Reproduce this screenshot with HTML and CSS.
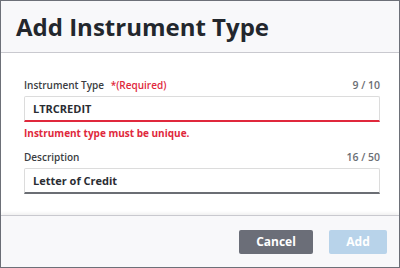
FILE: index.html
```html
<!DOCTYPE html>
<html>
<head>
<meta charset="utf-8" />
<link rel="stylesheet" href="styles.css">
<title>Add Instrument Type</title>
</head>
<body>
<div class="dialog">
    <div class="dialog-head">
        <h1>Add Instrument Type</h1>
    </div>
    <div class="dialog-body">
        <div class="field">
            <div class="field-top">
                <label>Instrument Type <span class="req">*(Required)</span></label>
                <span class="count">9 / 10</span>
            </div>
            <div class="f-text f-error">LTRCREDIT</div>
            <p class="err">Instrument type must be unique.</p>
        </div>
        <div class="field">
            <div class="field-top">
                <label>Description</label>
                <span class="count">16 / 50</span>
            </div>
            <div class="f-text">Letter of Credit</div>
        </div>
    </div>
    <div class="dialog-foot">
        <a class="btn btn-cancel" href="javascript:void(0)">Cancel</a>
        <a class="btn btn-add" href="javascript:void(0)">Add</a>
    </div>
</div>
</body>
</html>
```

FILE: styles.css
```css
body,div,p,h1{margin:0;padding:0;}
body{font-family:"Open Sans",Arial,sans-serif;color:#333;}
a{text-decoration:none;}
.dialog{box-sizing:border-box;width:400px;height:268px;border:1px solid #6d7078;display:flex;flex-direction:column;background:#fff;}
.dialog-head{height:51px;background:#f8f8fa;border-bottom:1px solid #c9c9cf;display:flex;align-items:center;padding:0 15px;}
.dialog-head h1{font:700 24px/30px "Open Sans",Arial,sans-serif;color:#23272d;margin-top:1px;}
.dialog-body{height:162px;padding:25px 19px 0 23px;box-sizing:border-box;}
.field-top{display:flex;justify-content:space-between;align-items:center;height:14px;margin-bottom:4px;}
.field-top label{font:600 10px/14px "Open Sans",Arial,sans-serif;color:#3a3d42;}
.field-top .req{color:#e0283c;margin-left:4px;}
.count{font:600 10.5px/14px "Open Sans",Arial,sans-serif;color:#6b6e74;}
.f-text{box-sizing:border-box;height:26px;border:1px solid #dcdcdc;border-bottom:2px solid #6b6e74;border-radius:2px 2px 0 0;padding:0 8px;font:700 11px/23px "Open Sans",Arial,sans-serif;color:#2a2d33;}
.f-text.f-error{border-bottom-color:#e0283c;}
.err{font:700 10px/14px "Open Sans",Arial,sans-serif;color:#e0283c;margin:4px 0 10px;}
.dialog-foot{flex:1;background:#f8f8fa;border-top:1px solid #c9c9cf;box-shadow:0 -2px 3px rgba(0,0,0,0.06);display:flex;justify-content:flex-end;align-items:center;gap:16px;padding:0 12px 0 0;}
.btn{display:block;height:24px;line-height:24px;border-radius:2px;color:#fff;font:700 12px/24px "Open Sans",Arial,sans-serif;text-align:center;}
.btn-cancel{width:74px;background:#6b6e78;}
.btn-add{width:58px;background:#b8d3ea;}
```
